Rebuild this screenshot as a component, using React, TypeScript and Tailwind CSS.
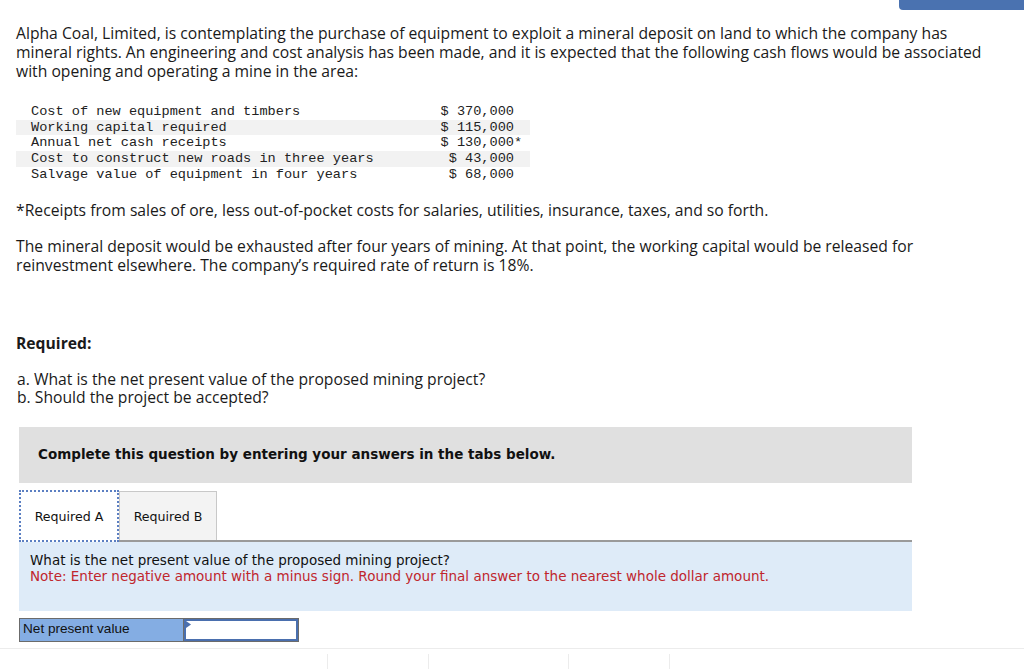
const rows = [
  { label: "Cost of new equipment and timbers", amount: "$ 370,000", star: false },
  { label: "Working capital required", amount: "$ 115,000", star: false },
  { label: "Annual net cash receipts", amount: "$ 130,000", star: true },
  { label: "Cost to construct new roads in three years", amount: "$ 43,000", star: false },
  { label: "Salvage value of equipment in four years", amount: "$ 68,000", star: false },
];

const App = () => {
  return (
    <div className="relative min-h-[669px] bg-white text-[#1a1a1a] font-[family-name:'Open_Sans',sans-serif]">
      {/* top-right button, cut off */}
      <div className="absolute right-0 top-0 h-[10px] w-[125px] rounded-bl-[4px] bg-[#4a72b0]" />

      <div className="pl-4 pr-[30px] pt-[24px]">
        <p className="text-[15.7px] leading-[19px]">
          Alpha Coal, Limited, is contemplating the purchase of equipment to exploit a mineral deposit on land to which the company has mineral rights. An engineering and cost analysis has been made, and it is expected that the following cash flows would be associated with opening and operating a mine in the area:
        </p>

        <table className="mt-[23px] w-[514px] border-collapse font-[family-name:'Liberation_Mono',monospace] text-[13.6px] leading-[15.7px] text-[#222]">
          <tbody>
            {rows.map((r, i) => (
              <tr key={r.label} className={i % 2 === 1 ? "bg-[#f2f2f2]" : ""}>
                <td className="pl-[15px] whitespace-pre">{r.label}</td>
                <td className="pr-[16px] text-right whitespace-pre">
                  {r.amount}
                  <span className="inline-block w-0">{r.star ? "*" : ""}</span>
                </td>
              </tr>
            ))}
          </tbody>
        </table>

        <p className="mt-[18px] text-[15.7px] leading-[19px]">
          *Receipts from sales of ore, less out-of-pocket costs for salaries, utilities, insurance, taxes, and so forth.
        </p>

        <p className="mt-[17px] text-[15.7px] leading-[19px]">
          The mineral deposit would be exhausted after four years of mining. At that point, the working capital would be released for reinvestment elsewhere. The company’s required rate of return is 18%.
        </p>

        <p className="mt-[59px] text-[15.7px] font-bold leading-[19px]">Required:</p>

        <p className="mt-[17px] pl-[1px] text-[15.7px] leading-[18px]">
          a. What is the net present value of the proposed mining project?
          <br />
          b. Should the project be accepted?
        </p>
      </div>

      <div className="ml-[19px] w-[893px]">
        <div className="mt-[21px] flex h-[56px] items-center bg-[#e0e0e0] pl-[19px] font-[family-name:'DejaVu_Sans',sans-serif] text-[13.5px] font-bold text-[#111]">
          Complete this question by entering your answers in the tabs below.
        </div>

        <div className="mt-[7px] flex items-end border-b-[2px] border-[#9a9a9a] font-[family-name:'DejaVu_Sans',sans-serif] text-[12.6px] text-[#111]">
          <div className="-mb-[2px] flex h-[52px] w-[100px] items-center justify-center border-[2px] border-dotted border-[#5b7fc2] bg-white pt-[3px]">
            Required A
          </div>
          <div className="flex h-[49px] w-[98px] items-center justify-center border border-b-0 border-[#c8c8c8] bg-[#f3f3f3] pt-[3px]">
            Required B
          </div>
        </div>

        <div className="h-[69px] bg-[#deebf8] px-[11px] pt-[10px] font-[family-name:'DejaVu_Sans',sans-serif] text-[13.5px] leading-[16px]">
          <p className="text-[#111]">What is the net present value of the proposed mining project?</p>
          <p className="text-[#c0262d]">Note: Enter negative amount with a minus sign. Round your final answer to the nearest whole dollar amount.</p>
        </div>

        <div className="mt-[7px] flex h-[24px] w-[280px] border border-[#6b6b6b] bg-[#6b6b6b]">
          <div className="flex w-[163px] items-center bg-[#84ade3] pl-[3px] font-[family-name:'Liberation_Sans',sans-serif] text-[13.6px] text-[#111]">
            Net present value
          </div>
          <div className="relative ml-[1px] flex-1 border-[2px] border-[#4a6fae] bg-white">
            <svg className="absolute left-0 top-0" width="5" height="7" viewBox="0 0 5 7">
              <polygon points="0,0 5,3.5 0,7" fill="#4a6fae" />
            </svg>
          </div>
        </div>
      </div>

      <div className="mt-[6px] flex h-[21px] border-t border-[#ececec]">
        <div className="w-[327px]" />
        <div className="mt-[5px] w-[101px] border-l border-[#ececec]" />
        <div className="mt-[5px] w-[140px] border-l border-[#ececec]" />
        <div className="mt-[5px] w-[101px] border-l border-[#ececec]" />
        <div className="mt-[5px] border-l border-[#ececec]" />
      </div>
    </div>
  );
};

export default App;
